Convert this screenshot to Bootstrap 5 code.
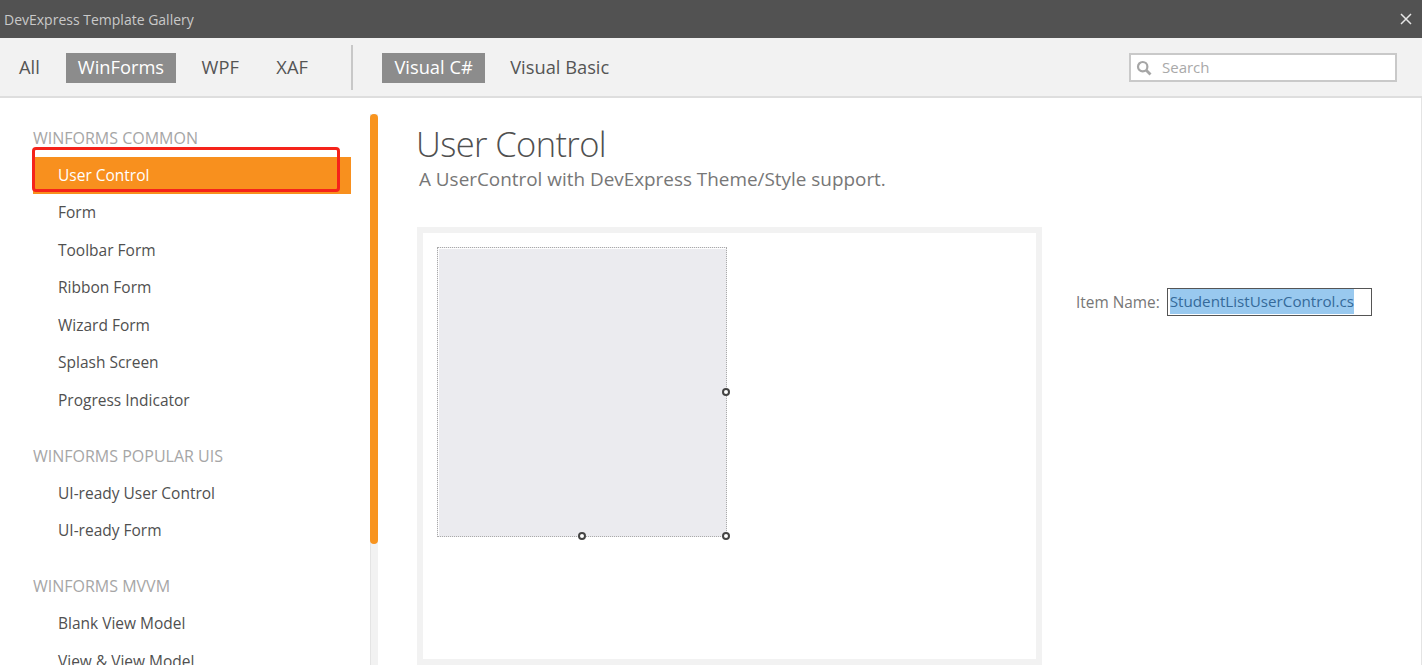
<!DOCTYPE html>
<html lang="en">

<head>
    <meta charset="UTF-8">
    <meta name="viewport" content="width=device-width, initial-scale=1.0">
    <title>DevExpress Template Gallery</title>
    <link href="https://cdn.jsdelivr.net/npm/bootstrap@5.3.0/dist/css/bootstrap.min.css" rel="stylesheet">
    <style>
        html, body { height: 665px; overflow: hidden; }
        body { font-family: "Open Sans", "Noto Sans", sans-serif; background: #fff; color: #505050; position: relative; }
        .title-bar { height: 38px; background: #525252; color: #c9c9c9; font-size: 14px; padding-left: 4px; }
        .title-bar svg { margin-right: 10px; }
        .tool-bar { height: 60px; background: #f2f2f2; border-bottom: 2px solid #dedede; padding: 2px 25px 0 7px; }
        .tab { height: 30px; padding: 0 12px 2px; font-size: 18.3px; color: #555; margin-right: 13.5px; }
        .tab.first { margin-right: 14px; }
        .tab.active { background: #8c8c8c; color: #fff; }
        .sep { width: 2px; height: 45px; background: #c8c8c8; margin: -2px 29px 0 18px; }
        .search { width: 268px; height: 29px; border: 2px solid #c9c9c9; background: #fff; color: #a9a9a9; font-size: 15px; padding-left: 5px; gap: 10px; margin-top: -1px; }
        .content { height: 567px; border-right: 1px solid #e4e4e4; }
        .side { width: 351px; padding: 30px 0 0 33px; flex: none; }
        .side h6 { font-size: 16px; font-weight: 400; color: #a6a6a6; margin: 0; line-height: 20px; }
        .side .list-group { margin-top: 9px; margin-bottom: 26.5px; --bs-list-group-bg: transparent; }
        .side .list-group-item { border: 0; padding: 0 0 0 25px; height: 37.5px; line-height: 36.5px; font-size: 15.5px; color: #505050; border-radius: 0; }
        .side .list-group-item.active { background: #f8901e; color: #fff; height: 37px; line-height: 36px; }
        .scroll { width: 8px; margin: 16px 0 0 19px; flex: none; background: #f2f2f2; border-left: 1px solid #e4e4e4; }
        .thumb { width: 8px; height: 430px; background: #f8941f; border-radius: 4px; margin-left: -1px; }
        .main { padding: 21px 0 0 38px; flex: 1; min-width: 0; }
        .main h1 { font-size: 34.5px; font-weight: 300; color: #505050; margin: 0; line-height: 50px; letter-spacing: -.6px; }
        .main .sub { font-size: 18.9px; color: #777; margin: -1px 0 1px 3px; line-height: 22px; }
        .preview { width: 625px; height: 438px; border: 6px solid #f2f2f2; margin: 36px 0 0 1px; padding: 14px; flex: none; }
        .canvas { width: 290px; height: 290px; background: #ebebef; border: 1px dotted #aaa; box-shadow: inset 1px 1px 0 #fff; position: relative; }
        .grip { position: absolute; width: 8px; height: 8px; border: 2px solid #444; border-radius: 50%; background: #fff; }
        .grip.r { right: -4px; top: 140px; }
        .grip.b { left: 140px; bottom: -4px; }
        .grip.rb { right: -4px; bottom: -4px; }
        .item-name { margin: 61px 0 0 34px; padding-top: 36px; font-size: 15.4px; color: #777; gap: 7px; }
        .name-box { width: 205px; height: 28px; border: 1.5px solid #555; padding-left: 2px; color: #356a9a; font-size: 15.2px; line-height: 25px; }
        .name-box span { background: #99c9ef; display: inline-block; }
        .callout { position: absolute; left: 32px; top: 147px; width: 308px; height: 45px; border: 3px solid #f5231a; border-radius: 4px; z-index: 5; }
    </style>
</head>

<body>
    <div class="title-bar d-flex align-items-center justify-content-between">
        <span>DevExpress Template Gallery</span>
        <svg width="12" height="12" viewBox="0 0 12 12"><path d="M1 1l10 10M11 1L1 11" stroke="#e6e6e6" stroke-width="1.5" fill="none"/></svg>
    </div>

    <div class="tool-bar d-flex align-items-center">
        <div class="tab first d-flex align-items-center">All</div>
        <div class="tab active d-flex align-items-center">WinForms</div>
        <div class="tab d-flex align-items-center">WPF</div>
        <div class="tab d-flex align-items-center">XAF</div>
        <div class="sep"></div>
        <div class="tab active d-flex align-items-center">Visual C#</div>
        <div class="tab d-flex align-items-center">Visual Basic</div>
        <div class="search d-flex align-items-center ms-auto">
            <svg width="16" height="16" viewBox="0 0 16 16"><circle cx="6.7" cy="6.7" r="4.7" stroke="#a6a6a6" stroke-width="2.2" fill="none"/><path d="M10 10l4.5 4.5" stroke="#a6a6a6" stroke-width="2.8"/></svg>
            <span>Search</span>
        </div>
    </div>

    <div class="content d-flex">
        <div class="side">
            <h6>WINFORMS COMMON</h6>
            <div class="list-group">
                <div class="list-group-item active">User Control</div>
                <div class="list-group-item">Form</div>
                <div class="list-group-item">Toolbar Form</div>
                <div class="list-group-item">Ribbon Form</div>
                <div class="list-group-item">Wizard Form</div>
                <div class="list-group-item">Splash Screen</div>
                <div class="list-group-item">Progress Indicator</div>
            </div>
            <h6>WINFORMS POPULAR UIS</h6>
            <div class="list-group">
                <div class="list-group-item">UI-ready User Control</div>
                <div class="list-group-item">UI-ready Form</div>
            </div>
            <h6>WINFORMS MVVM</h6>
            <div class="list-group">
                <div class="list-group-item">Blank View Model</div>
                <div class="list-group-item">View &amp; View Model</div>
            </div>
        </div>
        <div class="scroll"><div class="thumb"></div></div>
        <div class="main">
            <h1>User Control</h1>
            <p class="sub">A UserControl with DevExpress Theme/Style support.</p>
            <div class="d-flex">
                <div class="preview">
                    <div class="canvas">
                        <div class="grip r"></div>
                        <div class="grip b"></div>
                        <div class="grip rb"></div>
                    </div>
                </div>
                <div class="item-name d-flex align-items-start">
                    <label class="lh-lg">Item Name:</label>
                    <div class="name-box"><span>StudentListUserControl.cs</span></div>
                </div>
            </div>
        </div>
    </div>

    <div class="callout"></div>

    <script src="https://cdn.jsdelivr.net/npm/bootstrap@5.3.0/dist/js/bootstrap.bundle.min.js"></script>
</body>

</html>
